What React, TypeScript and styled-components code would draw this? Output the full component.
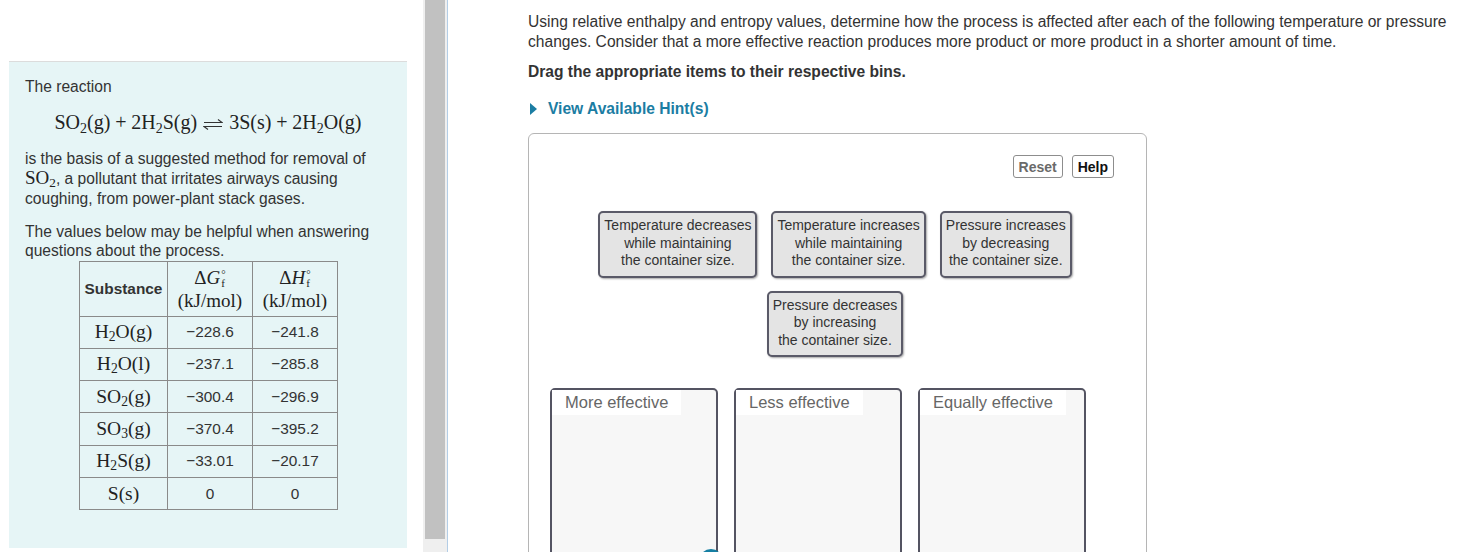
import React from "react";
import styled, { createGlobalStyle } from "styled-components";

const GlobalStyle = createGlobalStyle`
  html, body { margin: 0; padding: 0; overflow: hidden; background: #fff; }
  body { font-family: "Liberation Sans", Arial, sans-serif; color: #333; }
`;

const Page = styled.div`
  position: relative;
  display: flex;
  width: 1463px;
  height: 552px;
  overflow: hidden;
`;

const LeftColumn = styled.div`
  flex-shrink: 0;
  width: 407px;
  box-sizing: border-box;
  padding: 61px 0 4px 9px;
  display: flex;
  flex-direction: column;
`;

const Panel = styled.div`
  flex: 1;
  background: #e6f5f6;
  border-top: 1px solid #dcdcdc;
  padding: 15px 16px 0 16px;
  font-size: 15.6px;
`;

const Para = styled.p<{ $top?: number }>`
  margin: ${(p) => p.$top ?? 0}px 0 0 0;
  line-height: 19.5px;
  font-size: 15.6px;
  color: #333;
`;

const Equation = styled.div`
  margin-top: 10px;
  height: 30px;
  line-height: 30px;
  text-align: center;
  font-family: "Liberation Serif", "Times New Roman", serif;
  font-size: 20px;
  color: #222;
  white-space: nowrap;
`;

const Serif = styled.span<{ $size?: number }>`
  font-family: "Liberation Serif", "Times New Roman", serif;
  font-size: ${(p) => p.$size ?? 19}px;
  line-height: 1;
  color: #222;
`;

const Sub = styled.sub`
  font-size: 70%;
  line-height: 0;
  vertical-align: -0.25em;
`;

const Op = styled.span`
  margin: 0 0.24em;
`;

const Rel = styled.span`
  display: inline-block;
  margin: 0 0.3em;
  vertical-align: -1px;
`;

const DataTable = styled.table`
  margin-left: 54px;
  border-collapse: collapse;
  table-layout: fixed;
  width: 258px;
`;

const HeadCell = styled.th`
  border: 1px solid #8a8a8a;
  height: 54px;
  padding: 0;
  text-align: center;
  font-weight: normal;
  vertical-align: middle;
`;

const HeadLabel = styled.span`
  font-weight: bold;
  font-size: 15.4px;
  color: #333;
`;

const HeadStack = styled.div`
  display: flex;
  flex-direction: column;
  align-items: center;
  line-height: 23px;
`;

const MathLine = styled.div`
  display: flex;
  align-items: center;
  justify-content: center;
  height: 23px;
  font-family: "Liberation Serif", "Times New Roman", serif;
  font-size: 19px;
  color: #222;
`;

const Scripts = styled.span`
  display: flex;
  flex-direction: column;
  align-items: flex-start;
  margin-left: 1px;
  font-size: 11px;
  line-height: 9px;
  padding-top: 4px;
`;

const Cell = styled.td`
  border: 1px solid #8a8a8a;
  height: 31.3px;
  padding: 0;
  text-align: center;
  vertical-align: middle;
  font-size: 15.4px;
  color: #333;
`;

const ScrollTrack = styled.div`
  flex-shrink: 0;
  margin-left: 16px;
  width: 25px;
  box-sizing: border-box;
  padding: 0 2px;
  background: #efefef;
  border-right: 1px solid #b3cde6;
`;

const Thumb = styled.div`
  height: 539px;
  background: #c1c1c1;
`;

const RightColumn = styled.div`
  flex-shrink: 0;
  margin-left: 80px;
  width: 925px;
  padding-top: 12px;
  font-size: 15.6px;
`;

const Intro = styled.p`
  margin: 0;
  line-height: 20px;
  color: #333;
`;

const Instruction = styled.p`
  margin: 10px 0 0 0;
  line-height: 20px;
  font-weight: bold;
  color: #333;
`;

const Hint = styled.div`
  margin-top: 17px;
  height: 20px;
  display: flex;
  align-items: center;
  font-weight: bold;
  color: #1b7da3;
`;

const HintArrow = styled.span`
  width: 0;
  height: 0;
  margin: 0 11px 0 2px;
  border-left: 7px solid #1b7da3;
  border-top: 6px solid transparent;
  border-bottom: 6px solid transparent;
`;

const Workspace = styled.div`
  margin-top: 14px;
  width: 619px;
  min-height: 480px;
  box-sizing: border-box;
  border: 1px solid #b5b5b5;
  border-radius: 6px;
  padding: 21px 32px 0 20px;
`;

const ButtonRow = styled.div`
  display: flex;
  justify-content: flex-end;
  gap: 9px;
`;

const ToolButton = styled.button<{ $muted?: boolean }>`
  height: 23px;
  padding: 0 5px;
  border: 1px solid #8d8d8d;
  border-radius: 3px;
  background: #fff;
  font-family: "Liberation Sans", Arial, sans-serif;
  font-weight: bold;
  font-size: 14px;
  color: ${(p) => (p.$muted ? "#6a6a6a" : "#111")};
`;

const Tray = styled.div`
  margin-top: 33px;
  padding-left: 7px;
  display: flex;
  flex-wrap: wrap;
  justify-content: center;
  gap: 13px 14px;
`;

const DragItem = styled.div`
  box-sizing: border-box;
  padding: 4px 4px 6px;
  border: 2px solid #5a5a68;
  border-radius: 5px;
  background: #e4e4e4;
  box-shadow: 1px 1px 2px rgba(0, 0, 0, 0.35);
  text-align: center;
  font-size: 14px;
  line-height: 17.5px;
  color: #333;
  white-space: nowrap;
`;

const BinRow = styled.div`
  margin-top: 31px;
  margin-left: 1px;
  display: flex;
  gap: 16px;
`;

const Bin = styled.div`
  width: 168px;
  height: 220px;
  box-sizing: border-box;
  border: 2px solid #545462;
  border-radius: 5px;
  background: #f7f7f7;
`;

const BinLabel = styled.div`
  display: inline-block;
  height: 25px;
  line-height: 25px;
  padding: 0 13px;
  background: #fff;
  font-size: 16.5px;
  color: #666;
`;

const FloatDot = styled.div`
  position: absolute;
  left: 699px;
  top: 549px;
  width: 24px;
  height: 24px;
  border-radius: 50%;
  background: #157fa3;
`;

const Harpoons = () => (
  <svg width="20" height="11" viewBox="0 0 20 11" fill="none" stroke="#333" strokeWidth="1.1">
    <path d="M1 3.5 H19 L15 0.5" />
    <path d="M19 7.5 H1 L5 10.5" />
  </svg>
);

const rows: [React.ReactNode, string, string][] = [
  [<>H<Sub>2</Sub>O(g)</>, "−228.6", "−241.8"],
  [<>H<Sub>2</Sub>O(l)</>, "−237.1", "−285.8"],
  [<>SO<Sub>2</Sub>(g)</>, "−300.4", "−296.9"],
  [<>SO<Sub>3</Sub>(g)</>, "−370.4", "−395.2"],
  [<>H<Sub>2</Sub>S(g)</>, "−33.01", "−20.17"],
  [<>S(s)</>, "0", "0"],
];

const items = [
  ["Temperature decreases", "while maintaining", "the container size."],
  ["Temperature increases", "while maintaining", "the container size."],
  ["Pressure increases", "by decreasing", "the container size."],
  ["Pressure decreases", "by increasing", "the container size."],
];

const bins = ["More effective", "Less effective", "Equally effective"];

const HeadMath = ({ letter }: { letter: string }) => (
  <HeadStack>
    <MathLine>
      Δ<i>{letter}</i>
      <Scripts>
        <span>°</span>
        <span>f</span>
      </Scripts>
    </MathLine>
    <MathLine>(kJ/mol)</MathLine>
  </HeadStack>
);

export default function App() {
  return (
    <Page>
      <GlobalStyle />
      <LeftColumn>
        <Panel>
          <Para>The reaction</Para>
          <Equation>
            SO<Sub>2</Sub>(g)<Op>+</Op>2H<Sub>2</Sub>S(g)
            <Rel>
              <Harpoons />
            </Rel>
            3S(s)<Op>+</Op>2H<Sub>2</Sub>O(g)
          </Equation>
          <Para $top={12}>
            is the basis of a suggested method for removal of{" "}
            <Serif $size={19}>
              SO<Sub>2</Sub>
            </Serif>
            , a pollutant that irritates airways causing coughing, from power-plant stack gases.
          </Para>
          <Para $top={13.5}>The values below may be helpful when answering questions about the process.</Para>
          <DataTable>
            <colgroup>
              <col style={{ width: 88 }} />
              <col style={{ width: 85 }} />
              <col style={{ width: 85 }} />
            </colgroup>
            <thead>
              <tr>
                <HeadCell>
                  <HeadLabel>Substance</HeadLabel>
                </HeadCell>
                <HeadCell>
                  <HeadMath letter="G" />
                </HeadCell>
                <HeadCell>
                  <HeadMath letter="H" />
                </HeadCell>
              </tr>
            </thead>
            <tbody>
              {rows.map(([f, g, h], i) => (
                <tr key={i}>
                  <Cell>
                    <Serif $size={19.5}>{f}</Serif>
                  </Cell>
                  <Cell>{g}</Cell>
                  <Cell>{h}</Cell>
                </tr>
              ))}
            </tbody>
          </DataTable>
        </Panel>
      </LeftColumn>

      <ScrollTrack>
        <Thumb />
      </ScrollTrack>

      <RightColumn>
        <Intro>
          Using relative enthalpy and entropy values, determine how the process is affected after each of the
          following temperature or pressure changes. Consider that a more effective reaction produces more product
          or more product in a shorter amount of time.
        </Intro>
        <Instruction>Drag the appropriate items to their respective bins.</Instruction>
        <Hint>
          <HintArrow />
          View Available Hint(s)
        </Hint>
        <Workspace>
          <ButtonRow>
            <ToolButton $muted>Reset</ToolButton>
            <ToolButton>Help</ToolButton>
          </ButtonRow>
          <Tray>
            {items.map((lines, i) => (
              <DragItem key={i}>
                {lines.map((l, j) => (
                  <div key={j}>{l}</div>
                ))}
              </DragItem>
            ))}
          </Tray>
          <BinRow>
            {bins.map((b) => (
              <Bin key={b}>
                <BinLabel>{b}</BinLabel>
              </Bin>
            ))}
          </BinRow>
        </Workspace>
      </RightColumn>
      <FloatDot />
    </Page>
  );
}
